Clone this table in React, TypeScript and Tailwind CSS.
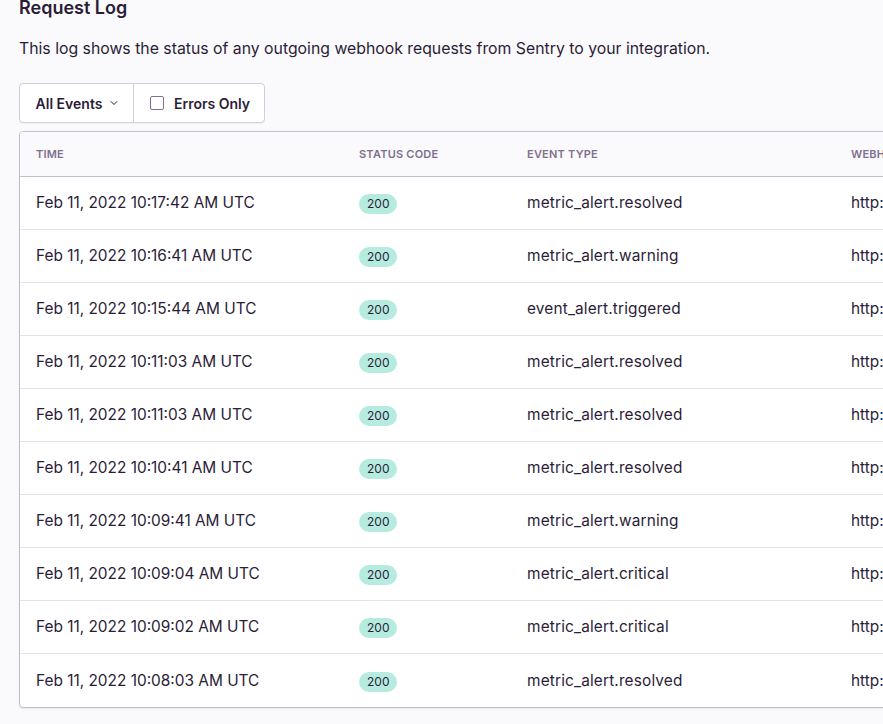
import { ChevronDown } from "lucide-react";

// Request log — webhook deliveries from Sentry to the integration.
const ROWS = [
  { time: "Feb 11, 2022 10:17:42 AM UTC", code: 200, event: "metric_alert.resolved" },
  { time: "Feb 11, 2022 10:16:41 AM UTC", code: 200, event: "metric_alert.warning" },
  { time: "Feb 11, 2022 10:15:44 AM UTC", code: 200, event: "event_alert.triggered" },
  { time: "Feb 11, 2022 10:11:03 AM UTC", code: 200, event: "metric_alert.resolved" },
  { time: "Feb 11, 2022 10:11:03 AM UTC", code: 200, event: "metric_alert.resolved" },
  { time: "Feb 11, 2022 10:10:41 AM UTC", code: 200, event: "metric_alert.resolved" },
  { time: "Feb 11, 2022 10:09:41 AM UTC", code: 200, event: "metric_alert.warning" },
  { time: "Feb 11, 2022 10:09:04 AM UTC", code: 200, event: "metric_alert.critical" },
  { time: "Feb 11, 2022 10:09:02 AM UTC", code: 200, event: "metric_alert.critical" },
  { time: "Feb 11, 2022 10:08:03 AM UTC", code: 200, event: "metric_alert.resolved" },
];

const COLS = "grid grid-cols-[323px_168px_324px_1fr]";

export default function App() {
  return (
    <div
      className="h-[724px] w-[883px] overflow-hidden bg-[#faf9fb] pl-[19px] text-[#2b1d38]"
      style={{ fontFamily: "Inter, 'Noto Sans', sans-serif" }}
    >
      <h2 className="-mt-[5px] text-[18px] font-semibold leading-[26px]">Request Log</h2>
      <p className="mt-[16px] text-[15.8px] leading-[24px]">
        This log shows the status of any outgoing webhook requests from Sentry to your integration.
      </p>

      {/* filters */}
      <div className="mt-[22px] flex h-[40px] w-[246px] rounded-[4px] border border-[#d4cdda] bg-white text-[14px] font-semibold shadow-[0_1px_1px_rgba(0,0,0,0.04)]">
        <button type="button" className="flex w-[114px] items-center justify-center gap-1.5 border-r border-[#d4cdda] pl-[3px]">
          All Events
          <ChevronDown className="h-3 w-3" strokeWidth={2} />
        </button>
        <button type="button" className="flex flex-1 items-center gap-2.5 pl-[16px]">
          <span className="h-[14px] w-[14px] rounded-[2px] border-[1.5px] border-[#80708f] bg-white" />
          Errors Only
        </button>
      </div>

      {/* table */}
      <div className="mt-[8px] w-[1100px] overflow-hidden rounded-[4px] border border-[#c6becf] bg-white shadow-[0_1px_2px_rgba(43,29,56,0.08)]">
        <div className={`${COLS} h-[45px] items-center border-b border-[#c6becf] bg-[#faf9fb] px-4 text-[11px] font-semibold uppercase tracking-[0.02em] text-[#80708f]`}>
          <div>Time</div>
          <div>Status Code</div>
          <div>Event Type</div>
          <div>Webhook URL</div>
        </div>
        {ROWS.map((r, i) => (
          <div
            key={i}
            className={`${COLS} h-[53px] items-center px-4 text-[15.4px] ${i < ROWS.length - 1 ? "border-b border-[#e7e1ec]" : ""}`}
          >
            <div className="whitespace-nowrap">{r.time}</div>
            <div>
              <span className="inline-flex h-[20px] items-center rounded-full bg-[#b6ecdf] px-[8px] text-[12px] leading-none">
                {r.code}
              </span>
            </div>
            <div className="whitespace-nowrap tracking-[0.01em]">{r.event}</div>
            <div className="whitespace-nowrap">http://localhost:8000/webhook</div>
          </div>
        ))}
      </div>
    </div>
  );
}
